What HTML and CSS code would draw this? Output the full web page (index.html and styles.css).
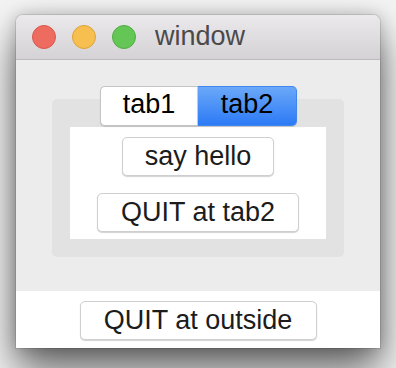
FILE: index.html
```html
<!DOCTYPE html>
<html lang="en">
<head>
	<meta charset="UTF-8">
	<title>window</title>
	<link rel="stylesheet" href="styles.css">
</head>
<body>
<div class="window">
	<div class="titlebar">
		<span class="light red"></span>
		<span class="light yellow"></span>
		<span class="light green"></span>
		<span class="title">window</span>
	</div>

	<div class="content">
		<div class="tabs">
			<div class="tab">tab1</div>
			<div class="tab selected">tab2</div>
		</div>
		<div class="tab-box">
			<div class="tab-page">
				<button class="btn hello">say hello</button>
				<button class="btn quit-tab">QUIT at tab2</button>
			</div>
		</div>
	</div>

	<div class="footer">
		<button class="btn quit-outside">QUIT at outside</button>
	</div>
</div>
</body>
</html>
```

FILE: styles.css
```css
html {
	font-family: "Liberation Sans", Arial, Helvetica, sans-serif;
}
body {
	margin: 0;
	padding: 15px 0 0 16px;
	background: #f3f3f3;
	height: 368px;
	box-sizing: border-box;
	overflow: hidden;
}
.window {
	width: 364px;
	border-radius: 7px 7px 0 0;
	overflow: hidden;
	box-shadow: 0 22px 40px rgba(0, 0, 0, 0.6), 0 0 16px rgba(0, 0, 0, 0.2), 0 0 0 1px rgba(0, 0, 0, 0.1);
}

/* title bar */
.titlebar {
	height: 44px;
	display: flex;
	align-items: center;
	padding-left: 16px;
	background: linear-gradient(#ebe9eb, #d4d2d4);
	border-bottom: 1px solid #bdbbbd;
}
.light {
	width: 24px;
	height: 24px;
	border-radius: 50%;
	margin-right: 16px;
	box-sizing: border-box;
}
.red {
	background: #ee6b60;
	border: 1px solid #d9574d;
}
.yellow {
	background: #f6bf4f;
	border: 1px solid #dca33a;
}
.green {
	background: #63c655;
	border: 1px solid #4fae42;
}
.title {
	margin-left: 3px;
	font-size: 27px;
	color: #4b4a4b;
	padding-bottom: 2px;
}

/* main area */
.content {
	background: #ececec;
	padding: 26px 36px 34px;
}
.tabs {
	display: flex;
	justify-content: center;
	position: relative;
	z-index: 1;
	margin-left: 12px;
	margin-right: 11px;
}
.tab {
	width: 97px;
	height: 40px;
	box-sizing: border-box;
	text-align: center;
	font-size: 27px;
	line-height: 34px;
	color: #000;
	background: #fff;
	border: 1px solid #c4c4c4;
	border-right: none;
	border-radius: 5px 0 0 5px;
	box-shadow: 0 1px 1px rgba(0, 0, 0, 0.15);
}
.tab.selected {
	width: 100px;
	background: linear-gradient(#6ba8f9, #2c7af6);
	border: 1px solid #3f86f0;
	border-left: 1px solid #c9c9c9;
	border-radius: 0 5px 5px 0;
}
.tab-box {
	margin-top: -27px;
	padding: 28px 18px 18px;
	background: #e2e2e2;
	border-radius: 5px;
}
.tab-page {
	background: #fff;
	height: 112px;
	display: flex;
	flex-direction: column;
	align-items: center;
	padding-top: 10px;
	box-sizing: border-box;
}

/* buttons */
.btn {
	font-family: inherit;
	font-size: 27px;
	color: #1c1c1c;
	background: #fff;
	border: 1px solid #cfcfcf;
	border-radius: 5px;
	box-shadow: 0 1px 1px rgba(0, 0, 0, 0.18);
	height: 39px;
	padding: 0;
	line-height: 35px;
}
.hello {
	width: 152px;
}
.quit-tab {
	width: 202px;
	margin-top: 17px;
}
.footer {
	background: #fff;
	height: 57px;
	display: flex;
	justify-content: center;
	padding-top: 10px;
	box-sizing: border-box;
}
.quit-outside {
	width: 237px;
}
```
